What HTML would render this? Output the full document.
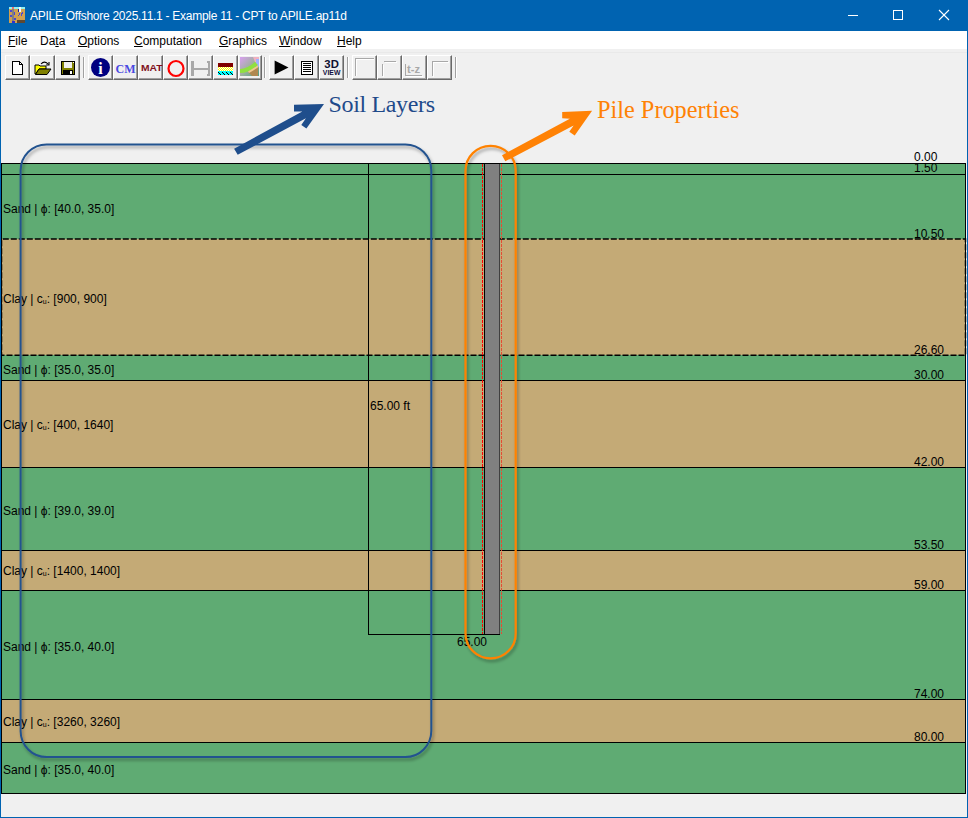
<!DOCTYPE html>
<html><head><meta charset="utf-8">
<style>
html,body{margin:0;padding:0;}
body{width:968px;height:818px;overflow:hidden;position:relative;background:#f0f0f0;font-family:"Liberation Sans",sans-serif;}
.abs{position:absolute;}
#title{left:0;top:0;width:968px;height:31px;background:#0063b1;}
#title .t{left:30px;top:9px;color:#fff;font-size:12px;letter-spacing:-0.27px;white-space:nowrap;}
#menu{left:1px;top:31px;width:966px;height:18px;background:#fff;}
#menu span{position:absolute;top:3px;font-size:12px;color:#000;white-space:nowrap;}
#menu u{text-decoration:underline;text-underline-offset:1px;}
#bl{left:0;top:0;width:1px;height:818px;background:#0063b1;}
#br{left:967px;top:0;width:1px;height:818px;background:#0063b1;}
#bb{left:0;top:817px;width:968px;height:1px;background:#0063b1;}
.btn{position:absolute;border-top:1px solid #fff;border-left:1px solid #fff;border-right:1px solid #696969;border-bottom:1px solid #696969;box-shadow:inset -1px -1px 0 #a0a0a0;background:#f0f0f0;}
.btn svg{position:absolute;left:0;top:0;}
.sep{position:absolute;top:57px;width:1px;height:21px;background:#a0a0a0;border-right:1px solid #fff;}
svg.main{position:absolute;left:0;top:0;}
</style></head>
<body>
<div id="title" class="abs">
  <svg class="abs" style="left:9px;top:7px" width="16" height="16" viewBox="0 0 16 16" shape-rendering="crispEdges">
    <rect x="0" y="0" width="16" height="16" fill="#d0a050"/>
    <rect x="0" y="0" width="16" height="2" fill="#90f0f0"/>
    <rect x="3" y="0" width="2" height="2" fill="#f07070"/>
    <rect x="3" y="2" width="2" height="12" fill="#808080"/>
    <rect x="10" y="0" width="2" height="5" fill="#f8f8f8"/>
    <rect x="9" y="2" width="1" height="3" fill="#2020a0"/>
    <rect x="1" y="3" width="2" height="2" fill="#4848d8"/><rect x="5" y="5" width="1" height="3" fill="#4848d8"/>
    <rect x="1" y="8" width="2" height="2" fill="#4848d8"/><rect x="5" y="11" width="2" height="2" fill="#4848d8"/>
    <rect x="10" y="6" width="1" height="2" fill="#4848d8"/><rect x="12" y="6" width="1" height="3" fill="#4848d8"/><rect x="13" y="5" width="1" height="2" fill="#4848d8"/><rect x="9" y="8" width="1" height="1" fill="#4848d8"/>
    <rect x="3" y="14" width="3" height="2" fill="#3030d0"/>
    <rect x="8" y="13" width="8" height="3" fill="#604830"/>
  </svg>
  <div class="t abs">APILE Offshore 2025.11.1 - Example 11 - CPT to APILE.ap11d</div>
  <svg class="abs" style="left:840px;top:0" width="128" height="31" viewBox="0 0 128 31">
    <line x1="8" y1="15.5" x2="18" y2="15.5" stroke="#fff" stroke-width="1"/>
    <rect x="53.5" y="10.5" width="9" height="9" fill="none" stroke="#fff" stroke-width="1"/>
    <line x1="99" y1="10" x2="109" y2="20" stroke="#fff" stroke-width="1.1"/>
    <line x1="109" y1="10" x2="99" y2="20" stroke="#fff" stroke-width="1.1"/>
  </svg>
</div>
<div id="menu" class="abs">
  <span style="left:7px"><u>F</u>ile</span>
  <span style="left:39px">Da<u>t</u>a</span>
  <span style="left:77px"><u>O</u>ptions</span>
  <span style="left:133px"><u>C</u>omputation</span>
  <span style="left:218px"><u>G</u>raphics</span>
  <span style="left:278px"><u>W</u>indow</span>
  <span style="left:336px"><u>H</u>elp</span>
</div>

<div class="abs" style="left:1px;top:52px;width:966px;height:1px;background:#e9e9e9"></div>
<div class="btn" style="left:5px;top:55px;width:23px;height:23px"><svg width="23" height="23" viewBox="0 0 23 23" shape-rendering="crispEdges"><path d="M6.5 5.5 H13.5 L16.5 8.5 V18.5 H6.5 Z" fill="#fff" stroke="#000"/><path d="M13.5 5.5 V8.5 H16.5" fill="none" stroke="#000"/></svg></div>
<div class="btn" style="left:30px;top:55px;width:23px;height:23px"><svg width="23" height="23" viewBox="0 0 23 23"><path d="M4 9 h4 l1 1 h6 v3 H8 L4.5 18 H4 Z" fill="#ffff00" stroke="#000" stroke-width="1"/><path d="M4.5 18.5 L8 13 H20 L16 18.5 Z" fill="#808000" stroke="#000" stroke-width="1"/><path d="M10 8 Q13.5 4 17.5 8.5" fill="none" stroke="#000" stroke-width="1.1"/><path d="M15 9 h3 v-3" fill="none" stroke="#000" stroke-width="1.1"/></svg></div>
<div class="btn" style="left:55px;top:55px;width:23px;height:23px"><svg width="23" height="23" viewBox="0 0 23 23" shape-rendering="crispEdges"><rect x="5" y="5" width="14" height="14" fill="#000"/><rect x="6" y="6" width="12" height="12" fill="#808000"/><rect x="8" y="6" width="8" height="6" fill="#f0f0f0"/><rect x="7" y="14" width="10" height="5" fill="#000"/><rect x="14" y="15" width="2" height="3" fill="#fff"/><rect x="17" y="6" width="1" height="1" fill="#fff"/></svg></div>
<div class="sep" style="left:83px"></div>
<div class="btn" style="left:88px;top:55px;width:23px;height:23px"><svg width="23" height="23" viewBox="0 0 23 23"><circle cx="11.5" cy="11.5" r="9.5" fill="#000080"/><text x="11.6" y="18" text-anchor="middle" font-family="Liberation Serif" font-weight="bold" font-size="16" fill="#fff">i</text></svg></div>
<div class="btn" style="left:113px;top:55px;width:23px;height:23px"><svg width="23" height="23" viewBox="0 0 23 23"><text x="11.5" y="17" text-anchor="middle" font-family="Liberation Serif" font-weight="bold" font-size="13" fill="#4848e0" textLength="20" lengthAdjust="spacingAndGlyphs">CM</text></svg></div>
<div class="btn" style="left:138px;top:55px;width:23px;height:23px"><svg width="25" height="23" viewBox="0 0 25 23"><text x="2" y="15" font-family="Liberation Sans" font-weight="bold" font-size="9.6" fill="#801020" textLength="21.5" lengthAdjust="spacingAndGlyphs">MAT</text></svg></div>
<div class="btn" style="left:163px;top:55px;width:23px;height:23px"><svg width="23" height="23" viewBox="0 0 23 23"><circle cx="12" cy="12.5" r="7.5" fill="none" stroke="#ff0000" stroke-width="2.2"/></svg></div>
<div class="btn" style="left:188px;top:55px;width:23px;height:23px"><svg width="23" height="23" viewBox="0 0 23 23" shape-rendering="crispEdges"><rect x="2" y="5" width="3" height="15" fill="#a8a8a8"/><rect x="5" y="12" width="15" height="2" fill="#a8a8a8"/><rect x="19" y="5" width="2" height="15" fill="#a8a8a8"/><rect x="18" y="5" width="1" height="2" fill="#a8a8a8"/><rect x="18" y="18" width="1" height="2" fill="#a8a8a8"/></svg></div>
<div class="btn" style="left:213px;top:55px;width:23px;height:23px"><svg width="23" height="23" viewBox="0 0 23 23" shape-rendering="crispEdges"><defs><pattern id="chk" width="2" height="2" patternUnits="userSpaceOnUse"><rect width="2" height="2" fill="#ffff00"/><rect width="1" height="1" fill="#fff"/><rect x="1" y="1" width="1" height="1" fill="#fff"/></pattern><pattern id="dg" width="4" height="4" patternUnits="userSpaceOnUse"><rect width="4" height="4" fill="#00ffff"/><rect x="0" y="0" width="1" height="1" fill="#000"/><rect x="1" y="1" width="1" height="1" fill="#000"/><rect x="2" y="2" width="1" height="1" fill="#000"/></pattern></defs><rect x="4" y="7" width="15" height="4" fill="#800000"/><rect x="4" y="11" width="15" height="4" fill="url(#chk)"/><rect x="4" y="15" width="15" height="4" fill="url(#dg)"/></svg></div>
<div class="btn" style="left:238px;top:55px;width:22px;height:23px"><svg width="23" height="23" viewBox="0 0 23 23"><defs><linearGradient id="gg1" x1="0" y1="0" x2="1" y2="1"><stop offset="0" stop-color="#d8a0f0"/><stop offset="0.5" stop-color="#a0b0a0"/><stop offset="1" stop-color="#50a080"/></linearGradient></defs><rect x="1" y="1" width="19" height="19" fill="url(#gg1)"/><path d="M14 1 H20 V9 L16 6 Z" fill="#f0b0c0"/><path d="M17 3 H20 V11 L17 9 Z" fill="#a0b0ff"/><path d="M1 13 Q8 13 16 6 L19 9 Q10 17 1 17 Z" fill="#90e040"/><path d="M9 16 Q15 13 19 10 V20 H13 Z" fill="#b08850"/><path d="M9 15.5 Q15 12 18.5 9.5 L19.5 11 Q15 14 10 17 Z" fill="#f0c890"/></svg></div>
<div class="sep" style="left:264px"></div>
<div class="btn" style="left:269px;top:55px;width:23px;height:23px"><svg width="23" height="23" viewBox="0 0 23 23"><path d="M4.6 4.6 L18.5 11.5 L4.6 18.4 Z" fill="#000"/></svg></div>
<div class="btn" style="left:294px;top:55px;width:23px;height:23px"><svg width="23" height="23" viewBox="0 0 23 23" shape-rendering="crispEdges"><rect x="6.5" y="5.5" width="11" height="13" fill="#fff" stroke="#000"/><g fill="#000"><rect x="8" y="7" width="8" height="1"/><rect x="8" y="9" width="8" height="1"/><rect x="8" y="11" width="8" height="1"/><rect x="8" y="13" width="8" height="1"/><rect x="8" y="15" width="8" height="1"/></g></svg></div>
<div class="btn" style="left:319px;top:55px;width:23px;height:23px"><svg width="23" height="23" viewBox="0 0 23 23"><text x="11.6" y="11.8" text-anchor="middle" font-family="Liberation Sans" font-weight="bold" font-size="10.5" fill="#101030" textLength="14.5" lengthAdjust="spacingAndGlyphs">3D</text><text x="11.6" y="18.9" text-anchor="middle" font-family="Liberation Sans" font-weight="bold" font-size="6.3" fill="#101040" textLength="17.5" lengthAdjust="spacingAndGlyphs">VIEW</text></svg></div>
<div class="sep" style="left:347px"></div>
<div class="btn" style="left:352px;top:55px;width:23px;height:23px"><svg width="23" height="23" viewBox="0 0 23 23" shape-rendering="crispEdges"><rect x="2" y="2" width="19" height="1" fill="#a8a8a8"/><rect x="2" y="2" width="1" height="18" fill="#a8a8a8"/><rect x="3" y="3" width="18" height="1" fill="#fff"/><rect x="3" y="3" width="1" height="17" fill="#fff"/></svg></div>
<div class="btn" style="left:377px;top:55px;width:23px;height:23px"><svg width="23" height="23" viewBox="0 0 23 23" shape-rendering="crispEdges"><rect x="6" y="5" width="12" height="1" fill="#a8a8a8"/><rect x="4" y="8" width="1" height="12" fill="#a8a8a8"/><rect x="7" y="6" width="12" height="1" fill="#fff"/><rect x="5" y="9" width="1" height="12" fill="#fff"/></svg></div>
<div class="btn" style="left:402px;top:55px;width:23px;height:23px"><svg width="23" height="23" viewBox="0 0 23 23"><g shape-rendering="crispEdges"><rect x="2" y="8" width="1" height="12" fill="#a8a8a8"/><rect x="2" y="19" width="17" height="1" fill="#a8a8a8"/><rect x="3" y="20" width="17" height="1" fill="#fff"/></g><text x="4" y="17" font-family="Liberation Sans" font-weight="bold" font-size="11" fill="#a8a8a8" textLength="13" lengthAdjust="spacingAndGlyphs">t-z</text></svg></div>
<div class="btn" style="left:427px;top:55px;width:23px;height:23px"><svg width="23" height="23" viewBox="0 0 23 23" shape-rendering="crispEdges"><rect x="5" y="5" width="15" height="1" fill="#a8a8a8"/><rect x="4" y="5" width="1" height="15" fill="#a8a8a8"/><rect x="6" y="6" width="15" height="1" fill="#fff"/><rect x="5" y="6" width="1" height="15" fill="#fff"/></svg></div>
<div class="sep" style="left:455px"></div>
<svg class="main" width="968" height="818" viewBox="0 0 968 818">
<defs><filter id="sh" x="-10%" y="-10%" width="120%" height="120%"><feDropShadow dx="1.5" dy="2.5" stdDeviation="1.6" flood-color="#000" flood-opacity="0.35"/></filter></defs>
<g shape-rendering="crispEdges">
<rect x="1" y="163" width="965" height="11" fill="#5fab73"/>
<rect x="1" y="174" width="965" height="65" fill="#5fab73"/>
<rect x="1" y="239" width="965" height="116" fill="#c4aa76"/>
<rect x="1" y="355" width="965" height="25" fill="#5fab73"/>
<rect x="1" y="380" width="965" height="87" fill="#c4aa76"/>
<rect x="1" y="467" width="965" height="83" fill="#5fab73"/>
<rect x="1" y="550" width="965" height="40" fill="#c4aa76"/>
<rect x="1" y="590" width="965" height="109" fill="#5fab73"/>
<rect x="1" y="699" width="965" height="43" fill="#c4aa76"/>
<rect x="1" y="742" width="965" height="51" fill="#5fab73"/>
<g stroke="#000" stroke-width="1" fill="none">
<rect x="1.5" y="163.5" width="964" height="630"/>
<line x1="1" y1="174.5" x2="966" y2="174.5"/>
<line x1="1" y1="380.5" x2="966" y2="380.5"/>
<line x1="1" y1="467.5" x2="966" y2="467.5"/>
<line x1="1" y1="550.5" x2="966" y2="550.5"/>
<line x1="1" y1="590.5" x2="966" y2="590.5"/>
<line x1="1" y1="699.5" x2="966" y2="699.5"/>
<line x1="1" y1="742.5" x2="966" y2="742.5"/>
<rect x="1.5" y="239" width="964" height="116.3" stroke-width="1.5" stroke-dasharray="6,2" stroke-dashoffset="-1.3" shape-rendering="auto"/>
<rect x="368.5" y="163.5" width="131" height="471"/>
</g>
<rect x="484" y="163" width="16" height="472" fill="#000"/>
<rect x="485" y="164" width="14" height="470" fill="#808080"/>
<rect x="499" y="164" width="1" height="470" fill="#404040"/>
<line x1="482.5" y1="164" x2="482.5" y2="634" stroke="#ff0000" stroke-dasharray="3,1"/>
<line x1="501.3" y1="164" x2="501.3" y2="634" stroke="#e44c34" stroke-width="1.4" stroke-dasharray="3,1"/>
</g>
<g font-family="Liberation Sans" font-size="12" fill="#000">
<text x="3" y="213">Sand | ϕ: [40.0, 35.0]</text>
<text x="3" y="303">Clay | c<tspan font-size="7" dy="0.5">u</tspan><tspan dy="-0.5">: [900, 900]</tspan></text>
<text x="3" y="374">Sand | ϕ: [35.0, 35.0]</text>
<text x="3" y="429">Clay | c<tspan font-size="7" dy="0.5">u</tspan><tspan dy="-0.5">: [400, 1640]</tspan></text>
<text x="3" y="515">Sand | ϕ: [39.0, 39.0]</text>
<text x="3" y="575">Clay | c<tspan font-size="7" dy="0.5">u</tspan><tspan dy="-0.5">: [1400, 1400]</tspan></text>
<text x="3" y="651">Sand | ϕ: [35.0, 40.0]</text>
<text x="3" y="726">Clay | c<tspan font-size="7" dy="0.5">u</tspan><tspan dy="-0.5">: [3260, 3260]</tspan></text>
<text x="3" y="774">Sand | ϕ: [35.0, 40.0]</text>
<text x="914" y="161">0.00</text>
<text x="914" y="172">1.50</text>
<text x="914" y="238">10.50</text>
<text x="914" y="354">26.60</text>
<text x="914" y="379">30.00</text>
<text x="914" y="466">42.00</text>
<text x="914" y="549">53.50</text>
<text x="914" y="589">59.00</text>
<text x="914" y="698">74.00</text>
<text x="914" y="741">80.00</text>
<text x="370" y="410">65.00 ft</text>
<text x="457" y="646">65.00</text>
</g>
<g filter="url(#sh)"><rect x="20.6" y="144.4" width="410.7" height="612.7" rx="26" ry="26" fill="none" stroke="#24528f" stroke-width="2"/></g>
<g filter="url(#sh)"><rect x="465.5" y="145.8" width="50.2" height="512.6" rx="25" ry="25" fill="none" stroke="#ff8205" stroke-width="2.2"/></g>
<path d="M234.1 148.7 L302.3 111.5 L294 111.5 L294 104.8 L324 104.1 L306.4 128.6 L301.3 125 L305.9 118.2 L237.7 154.7 Z" fill="#1f4e8c"/>
<path d="M502 155.3 L569.8 118.7 L562.2 118.2 L562.2 111.9 L592.1 110.8 L574.7 135.6 L569.3 131.7 L573.6 125.5 L505.3 161.3 Z" fill="#ff8205"/>
<text x="328.5" y="112" font-family="Liberation Serif" font-size="24" fill="#1f4a8a" textLength="106.5" lengthAdjust="spacing">Soil Layers</text>
<text x="597" y="117.5" font-family="Liberation Serif" font-size="24.3" fill="#ff8205">Pile Properties</text>
</svg>
<div id="bl" class="abs"></div><div id="br" class="abs"></div><div id="bb" class="abs"></div>
</body></html>
